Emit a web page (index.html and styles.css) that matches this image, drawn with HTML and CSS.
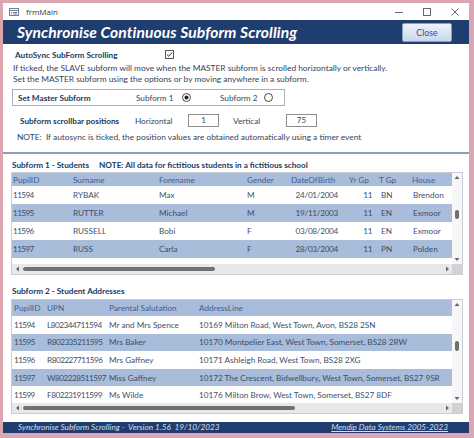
FILE: index.html
```html
<!DOCTYPE html>
<html>
<head>
<meta charset="utf-8">
<link rel="stylesheet" href="styles.css">
</head>
<body>
<div class="window">
  <div class="titlebar">
    <svg class="appicon" width="10" height="8" viewBox="0 0 10 8"><rect x="0.5" y="0.5" width="9" height="7" fill="#fff" stroke="#6f7c9a"/><line x1="1" y1="2.5" x2="9" y2="2.5" stroke="#6f7c9a"/><line x1="4" y1="4.5" x2="8" y2="4.5" stroke="#6f7c9a"/><line x1="4" y1="6" x2="8" y2="6" stroke="#6f7c9a"/><line x1="2" y1="4.5" x2="3" y2="4.5" stroke="#6f7c9a"/><line x1="2" y1="6" x2="3" y2="6" stroke="#6f7c9a"/></svg>
    <span class="wtitle">frmMain</span>
    <div class="wctrls">
      <svg width="10" height="10" viewBox="0 0 10 10"><line x1="1" y1="5.5" x2="9" y2="5.5" stroke="#444" stroke-width="0.8"/></svg>
      <svg width="10" height="10" viewBox="0 0 10 10"><rect x="1.5" y="1.5" width="7" height="7" fill="none" stroke="#444" stroke-width="0.8"/></svg>
      <svg width="10" height="10" viewBox="0 0 10 10"><path d="M1.5 1.5 L8.5 8.5 M8.5 1.5 L1.5 8.5" stroke="#444" stroke-width="0.8"/></svg>
    </div>
  </div>
  <div class="header">
    <span class="htitle">Synchronise Continuous Subform Scrolling</span>
    <button class="closebtn">Close</button>
  </div>
  <div class="row autosync">
    <span class="blabel w150">AutoSync SubForm Scrolling</span>
    <svg class="chk" width="9" height="9" viewBox="0 0 9 9"><rect x="0.5" y="0.5" width="8" height="8" fill="#fff" stroke="#555"/><path d="M2 4.6 L3.8 6.3 L7 2.6" fill="none" stroke="#333" stroke-width="1"/></svg>
  </div>
  <p class="txt first">If ticked, the SLAVE subform will move when the MASTER subform is scrolled horizontally or vertically.</p>
  <p class="txt second">Set the MASTER subform using the options or by moving anywhere in a subform.</p>
  <div class="masterbox">
    <span class="blabel m1">Set Master Subform</span>
    <span class="lbl m2">Subform 1</span>
    <svg class="radio" width="9" height="9" viewBox="0 0 9 9"><circle cx="4.5" cy="4.5" r="4" fill="#fff" stroke="#333" stroke-width="0.9"/><circle cx="4.5" cy="4.5" r="2" fill="#222"/></svg>
    <span class="lbl m3">Subform 2</span>
    <svg class="radio" width="9" height="9" viewBox="0 0 9 9"><circle cx="4.5" cy="4.5" r="4" fill="#fff" stroke="#333" stroke-width="0.9"/></svg>
  </div>
  <div class="row positions">
    <span class="blabel p1">Subform scrollbar positions</span>
    <span class="lbl p2">Horizontal</span>
    <span class="inbox">1</span>
    <span class="lbl p3">Vertical</span>
    <span class="inbox">75</span>
  </div>
  <p class="txt note">NOTE:&nbsp; If autosync is ticked, the position values are obtained automatically using a timer event</p>
  <div class="sep"></div>

  <div class="sublabel s1"><span>Subform 1 - Students</span><span class="note2">NOTE: All data for fictitious students in a fictitious school</span></div>
  <div class="grid g1">
    <div class="gmain">
      <div class="gbody">
        <div class="grow ghead c1"><span>PupilID</span><span>Surname</span><span>Forename</span><span>Gender</span><span>DateOfBirth</span><span>Yr Gp</span><span class="tg">T Gp</span><span>House</span></div>
        <div class="grow c1"><span class="n5">11594</span><span>RYBAK</span><span>Max</span><span>M</span><span class="r dob">24/01/2004</span><span class="r yr">11</span><span class="tgd">BN</span><span class="hs">Brendon</span></div>
        <div class="grow alt c1"><span class="n5">11595</span><span>RUTTER</span><span>Michael</span><span>M</span><span class="r dob">19/11/2003</span><span class="r yr">11</span><span class="tgd">EN</span><span class="hs">Exmoor</span></div>
        <div class="grow c1"><span class="n5">11596</span><span>RUSSELL</span><span>Bobi</span><span>F</span><span class="r dob">03/08/2004</span><span class="r yr">11</span><span class="tgd">EN</span><span class="hs">Exmoor</span></div>
        <div class="grow alt c1"><span class="n5">11597</span><span>RUSS</span><span>Carla</span><span>F</span><span class="r dob">28/03/2004</span><span class="r yr">11</span><span class="tgd">PN</span><span class="hs">Polden</span></div>
        <div class="grow c1"><span class="n5">11598</span><span>ROWE</span><span>Louis</span><span>M</span><span class="r dob">04/02/2004</span><span class="r yr">11</span><span class="tgd">PR</span><span class="hs">Polden</span></div>
      </div>
      <div class="vscroll">
        <svg class="arr" width="10" height="9" viewBox="0 0 10 9"><polygon points="2.5,6 7.5,6 5,3" fill="#666"/></svg>
        <div class="vtrack"><div class="vthumb t1"></div></div>
        <svg class="arr" width="10" height="9" viewBox="0 0 10 9"><polygon points="2.5,3 7.5,3 5,6" fill="#666"/></svg>
      </div>
    </div>
    <div class="hbar">
      <div class="hscroll">
        <svg class="arr" width="9" height="10" viewBox="0 0 9 10"><polygon points="6,2.5 6,7.5 3,5" fill="#666"/></svg>
        <div class="htrack"><div class="hthumb h1"></div></div>
        <svg class="arr" width="9" height="10" viewBox="0 0 9 10"><polygon points="3,2.5 3,7.5 6,5" fill="#666"/></svg>
      </div>
      <div class="corner"></div>
    </div>
  </div>

  <div class="sublabel s2"><span>Subform 2 - Student Addresses</span></div>
  <div class="grid g2">
    <div class="gmain">
      <div class="gbody">
        <div class="grow ghead c2"><span>PupilID</span><span>UPN</span><span>Parental Salutation</span><span>AddressLine</span></div>
        <div class="grow c2"><span class="n5">11594</span><span class="upn">L802344711594</span><span>Mr and Mrs Spence</span><span>10169 Milton Road, West Town, Avon, BS28 2SN</span></div>
        <div class="grow alt c2"><span class="n5">11595</span><span class="upn">R802335211595</span><span>Mrs Baker</span><span>10170 Montpelier East, West Town, Somerset, BS28 2RW</span></div>
        <div class="grow c2"><span class="n5">11596</span><span class="upn">R802227711596</span><span>Mrs Gaffney</span><span>10171 Ashleigh Road, West Town, BS28 2XG</span></div>
        <div class="grow alt c2"><span class="n5">11597</span><span class="upn">W802228511597</span><span>Miss Gaffney</span><span>10172 The Crescent, Bidwellbury, West Town, Somerset, BS27 9SR</span></div>
        <div class="grow c2"><span class="n5">11599</span><span class="upn">F802231911599</span><span>Ms Wilde</span><span>10176 Milton Brow, West Town, Somerset, BS27 8DF</span></div>
      </div>
      <div class="vscroll">
        <svg class="arr" width="10" height="9" viewBox="0 0 10 9"><polygon points="2.5,6 7.5,6 5,3" fill="#666"/></svg>
        <div class="vtrack"><div class="vthumb t2"></div></div>
        <svg class="arr" width="10" height="9" viewBox="0 0 10 9"><polygon points="2.5,3 7.5,3 5,6" fill="#666"/></svg>
      </div>
    </div>
    <div class="hbar">
      <div class="hscroll">
        <svg class="arr" width="9" height="10" viewBox="0 0 9 10"><polygon points="6,2.5 6,7.5 3,5" fill="#666"/></svg>
        <div class="htrack"><div class="hthumb h2"></div></div>
        <svg class="arr" width="9" height="10" viewBox="0 0 9 10"><polygon points="3,2.5 3,7.5 6,5" fill="#666"/></svg>
      </div>
      <div class="corner"></div>
    </div>
  </div>

  <div class="footer">
    <span>Synchronise Subform Scrolling -&nbsp; Version 1.56&nbsp; 19/10/2023</span>
    <span class="flink">Mendip Data Systems 2005-2023</span>
  </div>
</div>
</body>
</html>
```

FILE: styles.css
```css
* { box-sizing: border-box; }
html, body { margin: 0; }
body {
  background: #dca6b0;
  padding: 3px 5px 5px 3px;
  width: 474px;
  height: 438px;
  overflow: hidden;
  font-family: Lato, "Open Sans", sans-serif;
}
.window {
  width: 466px;
  height: 430px;
  background: #fff;
  display: flex;
  flex-direction: column;
}
.titlebar {
  height: 17px;
  flex: none;
  display: flex;
  align-items: center;
  padding-left: 6px;
}
.appicon { margin-top: 1px; }
.wtitle {
  margin-left: 7px;
  font-family: "Open Sans", sans-serif;
  font-size: 8px;
  color: #333;
}
.wctrls {
  margin-left: auto;
  display: flex;
  gap: 18px;
  padding-right: 9px;
}
.header {
  height: 24px;
  flex: none;
  background: #1f3e6f;
  display: flex;
  align-items: center;
  justify-content: space-between;
  padding: 0 17px 0 14px;
}
.htitle {
  color: #fff;
  font-weight: 700;
  font-style: italic;
  font-size: 15.6px;
  letter-spacing: 0.1px;
}
.closebtn {
  width: 50px;
  height: 19px;
  margin-top: 1px;
  border: 1px solid #8aa0c6;
  border-radius: 2px;
  background: linear-gradient(#eef3fb, #c8d6ee);
  color: #3c4f6e;
  font-family: Lato, sans-serif;
  font-size: 8.8px;
  padding: 0;
}
.row { display: flex; align-items: center; }
.blabel { font-weight: 700; font-size: 8.2px; color: #22395c; white-space: nowrap; }
.lbl { font-size: 8.2px; color: #36465e; white-space: nowrap; }
.autosync { margin-top: 5px; height: 11px; padding-left: 12px; }
.w150 { width: 150px; }
.txt {
  margin: 0;
  padding-left: 10px;
  font-size: 8.35px;
  line-height: 11px;
  color: #34435b;
  white-space: nowrap;
}
.txt.first { margin-top: 2.5px; }
.txt.note { margin-top: 4.5px; padding-left: 14px; }
.masterbox {
  margin: 4.5px 0 0 9px;
  width: 273px;
  height: 17px;
  border: 1px solid #a8afbd;
  display: flex;
  align-items: center;
  padding-left: 5px;
}
.m1 { width: 118px; }
.m2 { width: 46px; }
.m3 { width: 44px; margin-left: 29px; }
.positions { margin-top: 8px; height: 13px; padding-left: 17px; }
.p1 { width: 115px; }
.p2 { width: 53px; }
.p3 { width: 53px; margin-left: 14px; }
.inbox {
  width: 31px;
  height: 13px;
  border: 1px solid #8e8e8e;
  font-size: 8px;
  color: #36465e;
  text-align: center;
  line-height: 11px;
}
.sep { margin-top: 9.5px; height: 1.5px; background: #8f9fb9; flex: none; }
.sublabel {
  padding-left: 9px;
  height: 11px;
  line-height: 11px;
  font-weight: 700;
  font-size: 8.2px;
  color: #22395c;
  white-space: nowrap;
  flex: none;
}
.s1 { margin-top: 6px; }
.s2 { margin-top: 10.5px; }
.note2 { margin-left: 10px; }
.grid {
  margin: 1.5px 0 0 8px;
  width: 452px;
  border: 1px solid #c9ced6;
  display: flex;
  flex-direction: column;
  flex: none;
}
.g2 { margin-top: 2.5px; }
.gmain { display: flex; }
.gbody { flex: 1; overflow: hidden; }
.g1 .gbody { height: 91px; }
.g2 .gbody { height: 103px; }
.grow {
  display: grid;
  height: 18px;
  align-items: center;
  font-size: 8.2px;
  color: #435168;
  white-space: nowrap;
}
.g2 .grow { height: 17.6px; }
.g1 .ghead { height: 13px; }
.g2 .ghead { height: 16px; }
.ghead { background: #a9bcd9; color: #3f5f91; }
.alt { background: #a9bcd9; color: #3b4e6c; }
.c1 { grid-template-columns: 60px 86px 88px 44px 58px 30px 33px 1fr; padding-left: 1px; }
.c2 { grid-template-columns: 33px 62px 90px 1fr; padding-left: 2px; }
.n5 { letter-spacing: -0.6px; }
.upn { letter-spacing: -0.5px; }
.r { text-align: right; }
.dob { padding-right: 11px; letter-spacing: -0.3px; }
.yr { padding-right: 7px; letter-spacing: -0.4px; }
.tgd { padding-left: 2px; }
.hs { padding-left: 1px; }
.vscroll {
  width: 10px;
  flex: none;
  background: #f7f7f7;
  display: flex;
  flex-direction: column;
}
.arr { display: block; flex: none; }
.vtrack { flex: 1; display: flex; flex-direction: column; align-items: center; }
.vthumb { width: 4px; border-radius: 2px; background: #6f6f6f; }
.t1 { margin-top: 28px; height: 9px; }
.t2 { margin-top: 32px; height: 10px; }
.hbar { display: flex; height: 10px; }
.hscroll { flex: 1; background: #e8e8e8; display: flex; align-items: center; padding-left: 1px; }
.htrack { flex: 1; height: 10px; display: flex; align-items: center; }
.hthumb { height: 4px; border-radius: 2px; background: #717171; }
.h1 { margin-left: 1px; width: 192px; }
.h2 { margin-left: 1px; width: 272px; }
.corner { width: 10px; background: #d2d2d2; }
.footer {
  margin-top: auto;
  height: 11.5px;
  flex: none;
  background: #1f3e6f;
  display: flex;
  align-items: center;
  justify-content: space-between;
  padding: 0 21px 0 15px;
  font-size: 8.2px;
  font-style: italic;
  color: #d6deeb;
  white-space: nowrap;
}
.flink { text-decoration: underline; }
```
